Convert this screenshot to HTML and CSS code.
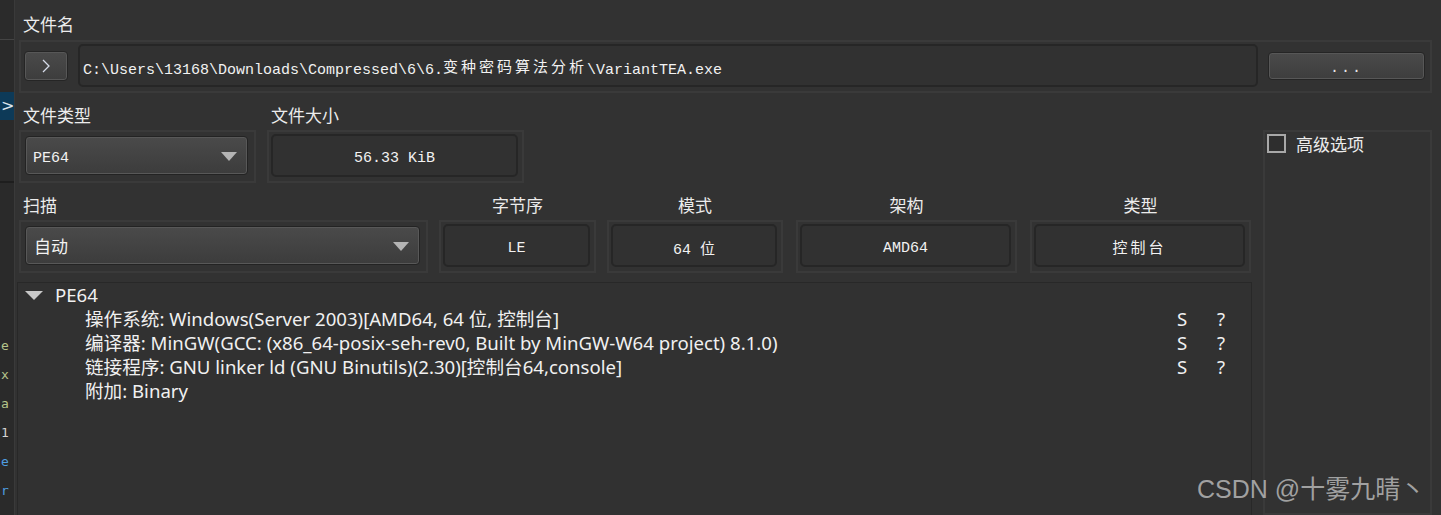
FILE: index.html
```html
<!DOCTYPE html>
<html lang="zh-CN">
<head>
<meta charset="utf-8">
<title>Detect It Easy</title>
<link rel="stylesheet" href="styles.css">
</head>
<body>
<div class="screen">
  <aside class="strip">
    <div class="strip-top"></div>
    <div class="strip-sel"><span>&gt;</span></div>
    <div class="strip-mid"></div>
    <div class="strip-code">
      <span class="c-g">e</span>
      <span class="c-g">x</span>
      <span class="c-g">a</span>
      <span class="c-w">1</span>
      <span class="c-b">e</span>
      <span class="c-b">r</span>
    </div>
  </aside>
  <main class="app">
    <div class="label label-first">文件名</div>
    <div class="group file-group">
      <button class="btn btn-go" type="button">
        <svg width="10" height="16" viewBox="0 0 10 16"><polyline points="2,2 8,8 2,14" fill="none" stroke="#d6dcea" stroke-width="1.3"/></svg>
      </button>
      <div class="field path"><span>C:\Users\13168\Downloads\Compressed\6\6.<span class="cjk">变种密码算法分析</span>\VariantTEA.exe</span></div>
      <button class="btn btn-browse" type="button">...</button>
    </div>
    <div class="body">
      <div class="left">
        <div class="row">
          <div class="col w-type">
            <div class="label">文件类型</div>
            <div class="group"><div class="combo"><span>PE64</span><span class="arrow"></span></div></div>
          </div>
          <div class="col w-size">
            <div class="label">文件大小</div>
            <div class="group"><div class="field center"><span>56.33 KiB</span></div></div>
          </div>
        </div>
        <div class="row">
          <div class="col w-scan">
            <div class="label">扫描</div>
            <div class="group"><div class="combo combo-cjk"><span class="cjk-ui">自动</span><span class="arrow"></span></div></div>
          </div>
          <div class="col w-order gap11">
            <div class="label center">字节序</div>
            <div class="group"><div class="field center"><span>LE</span></div></div>
          </div>
          <div class="col w-mode gap11">
            <div class="label center">模式</div>
            <div class="group"><div class="field center"><span>64 <span class="cjk1">位</span></span></div></div>
          </div>
          <div class="col w-arch gap13">
            <div class="label center">架构</div>
            <div class="group"><div class="field center"><span>AMD64</span></div></div>
          </div>
          <div class="col w-kind gap13">
            <div class="label center">类型</div>
            <div class="group"><div class="field center"><span class="cjk">控制台</span></div></div>
          </div>
        </div>
        <div class="tree">
          <div class="tree-row root"><span class="tri"></span><span class="name">PE64</span></div>
          <div class="tree-row child"><span class="name">操作系统: Windows(Server 2003)[AMD64, 64 位, 控制台]</span><span class="s">S</span><span class="q">?</span></div>
          <div class="tree-row child"><span class="name">编译器: MinGW(GCC: (x86_64-posix-seh-rev0, Built by MinGW-W64 project) 8.1.0)</span><span class="s">S</span><span class="q">?</span></div>
          <div class="tree-row child"><span class="name">链接程序: GNU linker ld (GNU Binutils)(2.30)[控制台64,console]</span><span class="s">S</span><span class="q">?</span></div>
          <div class="tree-row child"><span class="name">附加: Binary</span></div>
        </div>
      </div>
      <div class="right">
        <div class="group adv">
          <div class="check"><span class="box"></span><span class="check-text">高级选项</span></div>
        </div>
      </div>
    </div>
  </main>
  <div class="watermark">CSDN @十雾九晴丶</div>
</div>
</body>
</html>
```
FILE: styles.css
```css
* { box-sizing: border-box; }
html, body { margin: 0; padding: 0; }
body {
  width: 1441px;
  height: 515px;
  overflow: hidden;
  background: #323232;
  color: #e8e8e8;
  font-family: "Noto Sans CJK SC", "Noto Sans", sans-serif;
}
.screen {
  position: relative;
  display: flex;
  width: 1441px;
  height: 515px;
}

/* left strip (neighbouring window) */
.strip {
  width: 15px;
  flex: none;
  display: flex;
  flex-direction: column;
  background: #2a2a2a;
  border-right: 1px solid #3a3a3a;
  overflow: hidden;
}
.strip-top { height: 40px; border-bottom: 1px solid #444; background: #2b2b2b; }
.strip-sel {
  margin-top: 52px;
  height: 28px;
  background: #0d3a58;
  color: #dfe6ee;
  font: 16px "DejaVu Sans", sans-serif;
  line-height: 28px;
  padding-left: 1px;
}
.strip-mid { height: 63px; border-bottom: 2px solid #1e1e1e; }
.strip-code {
  margin-top: 148px;
  display: flex;
  flex-direction: column;
  font: 13px "DejaVu Sans Mono", monospace;
  line-height: 29px;
  padding-left: 1px;
}
.c-g { color: #b5c48a; }
.c-w { color: #d4d4d4; }
.c-b { color: #4f9de0; }

/* main app */
.app {
  flex: 1;
  display: flex;
  flex-direction: column;
  padding: 0 9px 0 4px;
}
.label {
  font-family: "Noto Sans CJK SC", sans-serif;
  font-size: 17px;
  line-height: 22px;
  height: 22px;
  padding-left: 4px;
  margin-top: 11px;
  margin-bottom: 4px;
  color: #ececec;
  white-space: nowrap;
}
.label.center { text-align: center; padding-left: 0; }
.label-first { margin-top: 13px; margin-bottom: 5px; }

.group {
  border: 2px solid #3a3a3a;
  padding: 2px 4px 4px 2px;
  height: 53px;
  display: flex;
  align-items: stretch;
}

.file-group {
  align-items: center;
  padding: 2px 5px 4px 3px;
}

.btn {
  height: 30px;
  border: 1px solid #252525;
  border-radius: 4px;
  background: linear-gradient(#4a4a4a, #3d3d3d);
  box-shadow: inset 0 0 0 1px #575757;
  color: #e8e8e8;
  padding: 0;
  display: flex;
  align-items: center;
  justify-content: center;
}
.btn-go { width: 44px; margin-right: 10px; }
.btn-browse {
  width: 157px;
  height: 28px;
  margin-left: 10px;
  font: 15px "Liberation Mono", monospace;
  letter-spacing: 2px;
  padding-top: 6px;
}

.field {
  flex: 1;
  height: 43px;
  border: 2px solid #262626;
  border-radius: 5px;
  background: #313131;
  font: 15px "Liberation Mono", "Noto Sans CJK SC", monospace;
  color: #f2f2f2;
  display: flex;
  align-items: center;
  white-space: pre;
  padding-top: 5px;
}
.field.center { justify-content: center; }
.path { padding-left: 3px; }
.cjk { font-family: "Noto Sans CJK SC", sans-serif; letter-spacing: 3px; position: relative; top: -2px; }
.cjk1 { font-family: "Noto Sans CJK SC", sans-serif; }

.combo {
  position: relative;
  flex: 1;
  margin: 2px;
  border: 1px solid #232323;
  border-radius: 4px;
  background: linear-gradient(#4a4a4a, #3c3c3c);
  box-shadow: inset 0 0 0 1px #585858;
  font: 15px "Liberation Mono", monospace;
  color: #f2f2f2;
  display: flex;
  align-items: center;
  padding-left: 7px;
  padding-top: 5px;
}
.combo-cjk { padding-left: 8px; padding-top: 0; }
.cjk-ui { font-family: "Noto Sans CJK SC", sans-serif; font-size: 17px; }
.arrow {
  position: absolute;
  right: 10px;
  top: 50%;
  margin-top: -4px;
  width: 0;
  height: 0;
  border-left: 8px solid transparent;
  border-right: 8px solid transparent;
  border-top: 9px solid #b4b4b4;
}

.body {
  display: flex;
  flex: 1;
  gap: 11px;
}
.left {
  width: 1233px;
  flex: none;
  display: flex;
  flex-direction: column;
}
.row { display: flex; }
.col { display: flex; flex-direction: column; flex: none; }
.w-type { width: 237px; margin-right: 11px; }
.w-size { width: 257px; }
.w-scan { width: 409px; }
.w-order { width: 157px; }
.w-mode { width: 176px; }
.w-arch { width: 221px; }
.w-kind { width: 221px; }
.gap11 { margin-left: 11px; }
.gap13 { margin-left: 13px; }

.tree {
  margin-top: 9px;
  margin-left: -2px;
  flex: 1;
  border: 1px solid #282828;
  border-bottom: none;
  background: #313131;
  font-family: "Noto Sans", "Noto Sans CJK SC", sans-serif;
  font-size: 18.6px;
  color: #f0f0f0;
}
.tree-row {
  height: 24px;
  line-height: 24px;
  display: flex;
  align-items: center;
  white-space: nowrap;
}
.tree-row .name { flex: 1; }
.root { padding-left: 7px; }
.tri {
  width: 0;
  height: 0;
  border-left: 9px solid transparent;
  border-right: 9px solid transparent;
  border-top: 9px solid #c8c8c8;
  margin-right: 12px;
}
.child { padding-left: 67px; }
.tree-row .s { width: 40px; }
.tree-row .q { width: 34px; }

.right {
  width: 169px;
  flex: none;
  padding-top: 37px;
  display: flex;
  flex-direction: column;
}
.adv {
  flex: 1;
  height: auto;
  padding: 2px 2px 0 2px;
  align-items: flex-start;
}
.check { display: flex; align-items: center; height: 19px; }
.box {
  width: 19px;
  height: 19px;
  border: 2px solid #a8a8a8;
  background: #2e2e2e;
  margin-right: 10px;
}
.check-text { font-size: 17px; color: #ececec; line-height: 22px; }

.watermark {
  position: absolute;
  left: 1197px;
  top: 472px;
  font-family: "Liberation Sans", "Noto Sans CJK SC", sans-serif;
  font-size: 25px;
  line-height: 34px;
  color: rgba(205, 205, 205, 0.72);
  white-space: nowrap;
}
```
